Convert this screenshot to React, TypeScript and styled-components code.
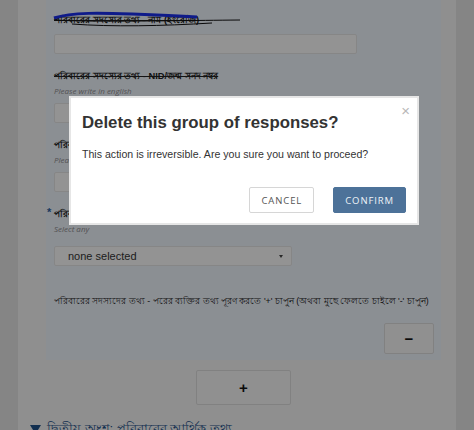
import React from "react";
import styled, { createGlobalStyle } from "styled-components";

const GlobalStyle = createGlobalStyle`
  html, body {
    margin: 0;
    padding: 0;
    height: 430px;
    overflow: hidden;
    background: #e2e2e2;
    font-family: "Liberation Sans", Arial, sans-serif;
  }
`;

const Page = styled.div`
  height: 430px;
  padding: 0 18px;
  box-sizing: border-box;
  background: #dedede;
`;

const Sheet = styled.div`
  height: 100%;
  background: #eeeeee;
  padding: 0 15px 0 28px;
  box-sizing: border-box;
  display: flex;
  flex-direction: column;
`;

const Group = styled.div`
  background: #e8eef6;
  padding: 14px 7px 6px 8px;
  display: flex;
  flex-direction: column;
`;

const Question = styled.div<{ $gap?: number }>`
  display: flex;
  flex-direction: column;
  margin-bottom: ${({ $gap }) => $gap ?? 16}px;
`;

const Label = styled.div<{ $struck?: boolean }>`
  position: relative;
  font-size: 9.3px;
  font-weight: bold;
  line-height: 13px;
  color: #222;
  text-decoration: ${({ $struck }) => ($struck ? "line-through" : "none")};
  white-space: nowrap;
`;

const Required = styled.span`
  position: absolute;
  left: -7px;
  top: -2px;
  color: #2d5f9a;
  font-size: 11px;
`;

const Hint = styled.div`
  font-family: "Open Sans", sans-serif;
  font-size: 8px;
  font-style: italic;
  color: #8a8a8a;
  margin-top: 2px;
  line-height: 11px;
`;

const Input = styled.div<{ $w?: number }>`
  width: ${({ $w }) => $w ?? 303}px;
  height: 20px;
  margin-top: 7px;
  background: #f6f6f6;
  border: 1px solid #e0e0e0;
  border-radius: 2px;
  box-sizing: border-box;
`;

const Select = styled.div`
  width: 238px;
  height: 20px;
  margin-top: 12px;
  background: #f6f6f6;
  border: 1px solid #e0e0e0;
  border-radius: 2px;
  box-sizing: border-box;
  display: flex;
  align-items: center;
  justify-content: space-between;
  padding: 0 8px 0 13px;
  font-size: 11px;
  color: #333;
`;

const Caret = styled.span`
  width: 0;
  height: 0;
  border-left: 2px solid transparent;
  border-right: 2px solid transparent;
  border-top: 3px solid #444;
`;

const Note = styled.div`
  font-size: 8.8px;
  line-height: 11px;
  color: #222;
  margin-top: 30px;
  white-space: nowrap;
`;

const SquareButton = styled.div<{ $w: number; $h: number }>`
  width: ${({ $w }) => $w}px;
  height: ${({ $h }) => $h}px;
  background: #f0f0f0;
  border: 1px solid #d8d8d8;
  border-radius: 2px;
  box-sizing: border-box;
  display: flex;
  align-items: center;
  justify-content: center;
  font-weight: bold;
  font-size: 15px;
  color: #111;
`;

const MinusRow = styled.div`
  display: flex;
  justify-content: flex-end;
  margin-top: 16px;
`;

const PlusRow = styled.div`
  display: flex;
  justify-content: center;
  margin-top: 10px;
`;

const SectionHead = styled.div`
  display: flex;
  align-items: center;
  gap: 6px;
  margin: 14px 0 0 -16px;
  font-size: 13px;
  color: #1e4f86;
  white-space: nowrap;
`;

const Scribble = styled.svg`
  position: absolute;
  left: -2px;
  top: -4px;
`;

const Overlay = styled.div`
  position: fixed;
  inset: 0;
  background: rgba(0, 0, 0, 0.4);
`;

const Modal = styled.div`
  position: fixed;
  left: 69px;
  top: 96px;
  width: 350px;
  height: 129px;
  background: #fff;
  border: 2px solid #e6e6e6;
  box-sizing: border-box;
  padding: 15px 11px 0 11px;
  display: flex;
  flex-direction: column;
`;

const Close = styled.span`
  position: absolute;
  right: 7px;
  top: 4px;
  font-size: 15px;
  color: #b8b8b8;
`;

const Title = styled.h2`
  margin: 0;
  font-size: 16.8px;
  font-weight: bold;
  color: #333;
`;

const Body = styled.p`
  margin: 15px 0 0;
  font-size: 10.6px;
  color: #333;
`;

const Actions = styled.div`
  display: flex;
  justify-content: flex-end;
  gap: 19px;
  margin-top: 27px;
`;

const ActionButton = styled.button<{ $primary?: boolean }>`
  height: 26px;
  padding: 0 11px;
  font-family: "Open Sans", sans-serif;
  font-size: 9.5px;
  letter-spacing: 0.9px;
  border-radius: 2px;
  background: ${({ $primary }) => ($primary ? "#4d7299" : "#fff")};
  color: ${({ $primary }) => ($primary ? "#eef3f8" : "#555")};
  border: 1px solid ${({ $primary }) => ($primary ? "#4d7299" : "#d6d6d6")};
`;

export default function App() {
  return (
    <>
      <GlobalStyle />
      <Page>
        <Sheet>
          <Group>
            <Question>
              <Label $struck>
                পরিবারের সদস্যের তথ্য - নাম (ইংরেজি)
                <Scribble width="190" height="20" viewBox="0 0 190 20">
                  <path d="M2 8 C 20 2, 50 3, 80 4 C 110 5, 130 6, 145 7" stroke="#1a2de6" strokeWidth="3" fill="none" />
                  <path d="M2 10 C 40 12, 90 11, 188 10 M20 14 C 60 17, 110 16, 160 13" stroke="#111" strokeWidth="1" fill="none" />
                </Scribble>
              </Label>
              <Input />
            </Question>
            <Question>
              <Label $struck>পরিবারের সদস্যের তথ্য - NID/জন্ম সনদ নম্বর</Label>
              <Hint>Please write in english</Hint>
              <Input />
            </Question>
            <Question>
              <Label>পরিবারের সদস্যের তথ্য - মোবাইল নম্বর</Label>
              <Hint>Please write in english</Hint>
              <Input />
            </Question>
            <Question $gap={0}>
              <Label>
                <Required>*</Required>
                পরিবারের সদস্যের সম্পর্ক
              </Label>
              <Hint>Select any</Hint>
              <Select>
                none selected
                <Caret />
              </Select>
            </Question>
            <Note>
              পরিবারের সদস্যদের তথ্য - পরের ব্যক্তির তথ্য পূরণ করতে '+' চাপুন (অথবা মুছে ফেলতে চাইলে '-' চাপুন)
            </Note>
            <MinusRow>
              <SquareButton $w={50} $h={31}>−</SquareButton>
            </MinusRow>
          </Group>
          <PlusRow>
            <SquareButton $w={95} $h={35}>+</SquareButton>
          </PlusRow>
          <SectionHead>
            <svg width="11" height="9" viewBox="0 0 11 9">
              <path d="M0 0 H11 L5.5 9 Z" fill="#1e4f86" />
            </svg>
            দ্বিতীয় অংশ: পরিবারের আর্থিক তথ্য
          </SectionHead>
        </Sheet>
      </Page>
      <Overlay />
      <Modal>
        <Close>×</Close>
        <Title>Delete this group of responses?</Title>
        <Body>This action is irreversible. Are you sure you want to proceed?</Body>
        <Actions>
          <ActionButton>CANCEL</ActionButton>
          <ActionButton $primary>CONFIRM</ActionButton>
        </Actions>
      </Modal>
    </>
  );
}
